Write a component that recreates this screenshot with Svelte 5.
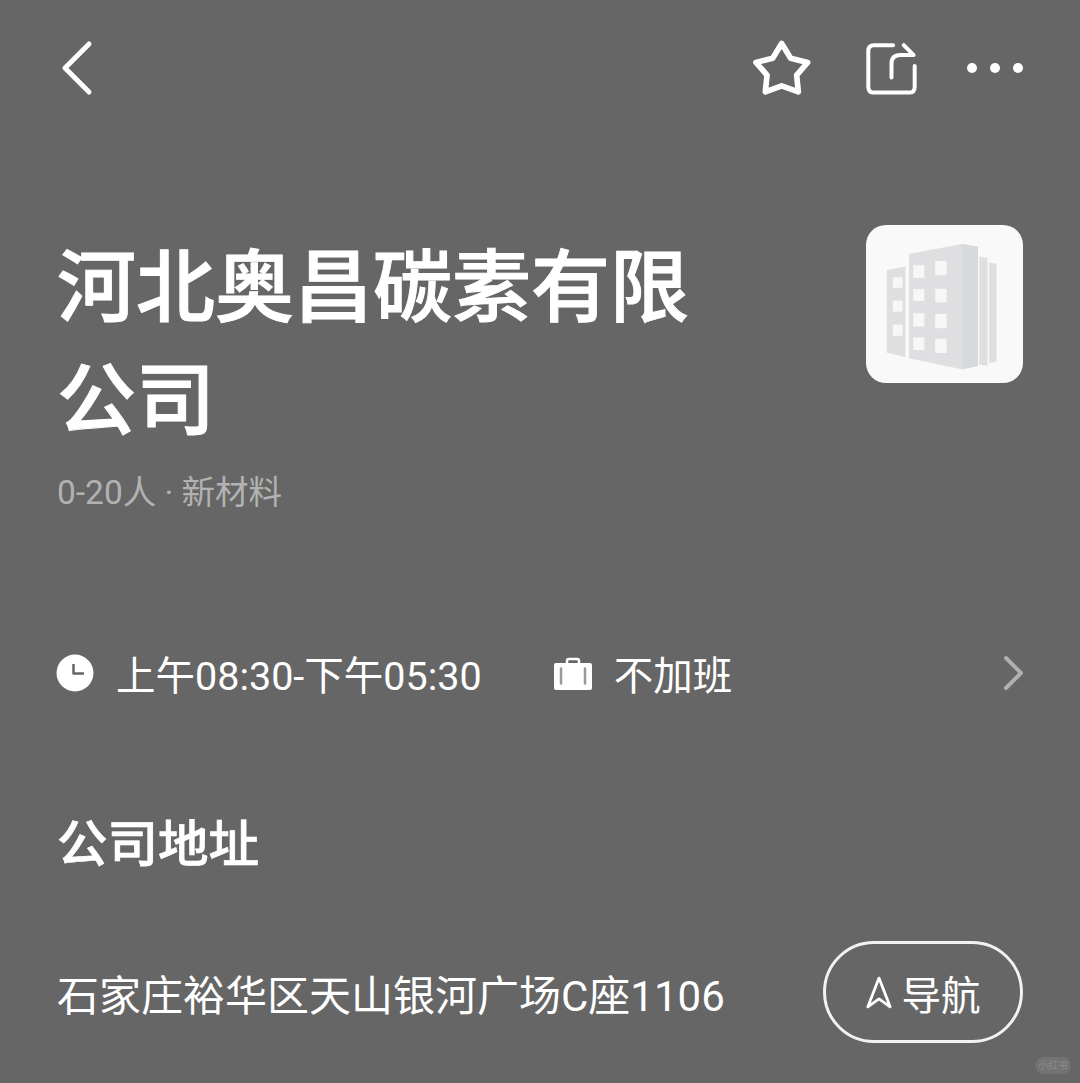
<!-- Company detail header: name, size, hours and address, on a dimmed page. -->
<script lang="ts">
	const title = '河北奥昌碳素有限公司';
	const windows = [
		[189, 166, 33, 38], [255, 153, 34, 43],
		[189, 238, 33, 36], [255, 237, 34, 41],
		[189, 311, 33, 40], [255, 313, 34, 43],
		[189, 384, 33, 38], [255, 388, 34, 43],
		[127, 202, 29, 32], [127, 273, 29, 33], [127, 345, 29, 34]
	];
</script>

<main class="page">
	<header class="top">
		<svg class="back" viewBox="0 0 36 60" aria-hidden="true">
			<path d="M30 6 6 30l24 24" />
		</svg>
		<div class="actions">
			<svg class="star" viewBox="38 60 174 170" aria-hidden="true">
				<path d="M124 73 151 117 202 130 169 168 174 218 124 200 75 218 80 168 47 130 97 117Z" />
			</svg>
			<svg class="share" viewBox="375 60 160 165" aria-hidden="true">
				<path d="M460 72H402Q385 72 385 89V198Q385 215 402 215H508Q525 215 525 198V135" />
				<path d="M455 170V128Q455 102 482 102H522L492 72" />
			</svg>
			<div class="dots"><i></i><i></i><i></i></div>
		</div>
	</header>

	<section class="hero">
		<div>
			<h1>{title}</h1>
			<p class="meta">0-20人 · 新材料</p>
		</div>
		<div class="logo">
			<svg viewBox="46 46 474 474" aria-hidden="true">
				<path class="wall" d="M109 180 165 170V443L109 430Z" />
				<path class="wall" d="M176 132 335 102 384 110V470L335 480 176 447Z" />
				<path class="shade" d="M335 102 384 110V470L335 480Z" />
				<path class="wall" d="M388 139 413 145V470L388 466Z" />
				<path class="wall" d="M418 157 440 162V457L418 461Z" />
				{#each windows as [x, y, w, h]}
					<rect {x} {y} width={w} height={h} />
				{/each}
			</svg>
		</div>
	</section>

	<section class="info">
		<svg class="clock" viewBox="0 0 38 38" aria-hidden="true">
			<circle cx="19" cy="19" r="18.5" />
			<path d="M17.5 10v9.5H28" />
		</svg>
		<span class="hours">上午08:30-下午05:30</span>
		<svg class="case" viewBox="0 0 38 38" aria-hidden="true">
			<path class="body" d="M2 8h34a2 2 0 0 1 2 2v23a2 2 0 0 1-2 2H2a2 2 0 0 1-2-2V10a2 2 0 0 1 2-2Z" />
			<path class="handle" d="M13 9V6Q13 4 15 4h8Q25 4 25 6V9" />
			<path class="slot" d="M7 13.500v15M31 13.500v15" />
		</svg>
		<span class="overtime">不加班</span>
		<svg class="chev" viewBox="0 0 24 36" aria-hidden="true">
			<path d="M7 3 22 18 7 33" />
		</svg>
	</section>

	<h2>公司地址</h2>

	<section class="address">
		<span>石家庄裕华区天山银河广场C座1106</span>
		<button type="button">
			<svg viewBox="0 0 28 36" aria-hidden="true">
				<path d="M14 3 26 34 14 25.500 2 34Z" />
			</svg>
			导航
		</button>
	</section>

	<span class="mark">小红书</span>
</main>

<style>
	:global(body) {
		margin: 0;
		background: #666;
	}
	.page {
		position: relative;
		box-sizing: border-box;
		height: 1083px;
		padding: 0 57px;
		overflow: hidden;
		background: #666;
		color: #fff;
		font-family: Roboto, 'Noto Sans CJK SC', sans-serif;
	}
	svg {
		display: block;
		flex: none;
		fill: none;
		stroke: #fff;
		stroke-linecap: round;
		stroke-linejoin: round;
	}
	.top {
		display: flex;
		align-items: center;
		justify-content: space-between;
		height: 136px;
	}
	.back {
		width: 36px;
		height: 60px;
		margin-left: 2px;
		stroke-width: 5;
	}
	.actions {
		display: flex;
		align-items: center;
	}
	.star {
		width: 58px;
		height: 57px;
		margin-top: -2px;
		stroke-width: 17;
	}
	.share {
		width: 53px;
		height: 55px;
		margin-left: 54px;
		margin-right: 2px;
		stroke-width: 12;
	}
	.dots {
		display: flex;
		gap: 13px;
		margin-left: 47px;
	}
	.dots i {
		width: 10px;
		height: 10px;
		border-radius: 50%;
		background: #fff;
	}
	.hero {
		display: flex;
		align-items: flex-start;
		justify-content: space-between;
		padding-top: 89px;
	}
	h1 {
		width: 660px;
		margin: 0;
		font-size: 79px;
		font-weight: 500;
		line-height: 113px;
		font-family: 'Noto Sans CJK SC', sans-serif;
		-webkit-text-stroke: 1px #fff;
	}
	.meta {
		margin: 0;
		padding-top: 19px;
		font-size: 33.500px;
		line-height: 46px;
		color: #b2b2b2;
	}
	.logo {
		width: 157px;
		height: 158px;
		border-radius: 20px;
		background: #f9f9f9;
	}
	.logo svg {
		width: 157px;
		height: 158px;
		stroke: none;
	}
	.logo .wall {
		fill: #dfdfe1;
	}
	.logo .shade {
		fill: #d8d9db;
	}
	.logo rect {
		fill: #f7f7f7;
	}
	.info {
		display: flex;
		align-items: center;
		height: 60px;
		margin-top: 131px;
	}
	.clock {
		width: 38px;
		height: 38px;
		margin-left: -1px;
		margin-top: -8px;
		stroke: none;
	}
	.clock circle {
		fill: #fff;
	}
	.clock path {
		stroke: #666;
		stroke-width: 2.500;
		stroke-linecap: butt;
	}
	.hours,
	.overtime {
		font-size: 39.500px;
		line-height: 60px;
	}
	.hours {
		margin-left: 22px;
	}
	.case {
		width: 38px;
		height: 38px;
		margin-left: 72px;
		margin-top: -7px;
		stroke: none;
	}
	.case .body {
		fill: #fff;
	}
	.case .handle {
		stroke: #fff;
		stroke-width: 2.500;
	}
	.case .slot {
		stroke: #999;
		stroke-width: 2.500;
	}
	.overtime {
		margin-left: 22px;
	}
	.chev {
		width: 24px;
		height: 36px;
		margin-left: auto;
		margin-top: -8px;
		stroke: #b0b0b0;
		stroke-width: 4;
	}
	h2 {
		margin: 0;
		padding-top: 98px;
		font-size: 50.500px;
		font-weight: 500;
		line-height: 70px;
		font-family: 'Noto Sans CJK SC', sans-serif;
		-webkit-text-stroke: 0.7px #fff;
	}
	.address {
		display: flex;
		align-items: center;
		justify-content: space-between;
		margin-top: 66px;
		font-size: 42px;
	}
	button {
		display: flex;
		align-items: center;
		justify-content: center;
		gap: 10px;
		box-sizing: border-box;
		width: 200px;
		height: 102px;
		padding: 0;
		border: 3px solid #f2f2f2;
		border-radius: 51px;
		background: none;
		color: #fff;
		font: inherit;
		font-size: 39.500px;
	}
	button svg {
		width: 26px;
		height: 34px;
		stroke-width: 3;
	}
	.mark {
		position: absolute;
		right: 9px;
		bottom: 9px;
		width: 36px;
		height: 17px;
		border-radius: 9px;
		background: #737373;
		color: #8c8c8c;
		font-size: 10px;
		line-height: 17px;
		text-align: center;
	}
</style>
